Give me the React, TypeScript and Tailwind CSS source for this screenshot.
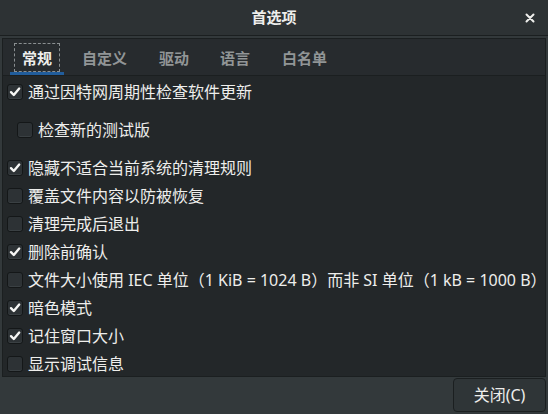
import React from "react";

const items: { label: string; checked: boolean; indent?: boolean }[] = [
  { label: "通过因特网周期性检查软件更新", checked: true },
  { label: "检查新的测试版", checked: false, indent: true },
  { label: "隐藏不适合当前系统的清理规则", checked: true },
  { label: "覆盖文件内容以防被恢复", checked: false },
  { label: "清理完成后退出", checked: false },
  { label: "删除前确认", checked: true },
  { label: "文件大小使用 IEC 单位（1 KiB = 1024 B）而非 SI 单位（1 kB = 1000 B）", checked: false },
  { label: "暗色模式", checked: true },
  { label: "记住窗口大小", checked: true },
  { label: "显示调试信息", checked: false },
];

function Box({ checked }: { checked: boolean }) {
  return (
    <div className="w-[16px] h-[16px] rounded-[3px] border border-[#141718] bg-[#2d3235] shadow-[inset_0_-1px_0_#3a4043] flex items-center justify-center shrink-0">
      {checked && (
        <svg width="12" height="12" viewBox="0 0 12 12">
          <path d="M2 6.2 L4.8 9 L10.2 2.6" stroke="#f6f6f4" strokeWidth="2.4" fill="none" strokeLinecap="round" strokeLinejoin="round" />
        </svg>
      )}
    </div>
  );
}

export default function App() {
  const font = { fontFamily: '"Noto Sans", "Noto Sans CJK SC", sans-serif' };
  return (
    <div className="w-[548px] h-[414px] bg-[#33393b] flex flex-col text-[#eeeeec] overflow-hidden" style={font}>
      <div className="h-[36px] bg-[#2d3234] border-b border-[#1b1f20] flex items-center justify-center relative shrink-0">
        <span className="text-[15px] font-bold text-[#eeeeec]">首选项</span>
        <svg className="absolute right-[13px] top-[13px]" width="10" height="10" viewBox="0 0 10 10">
          <path d="M1.5 1.5 L8.5 8.5 M8.5 1.5 L1.5 8.5" stroke="#eeeeec" strokeWidth="2" strokeLinecap="round" />
        </svg>
      </div>
      <div className="mx-[2px] mt-[2px] h-[339px] border border-[#1b1f20] bg-[#232729] flex flex-col shrink-0">
        <div className="h-[37px] flex items-end pl-[7px] border-b border-[#1b1f20] bg-[#272b2e] shrink-0">
          <div className="w-[54px] h-[37px] flex flex-col items-center">
            <div className="mt-[5px] px-[7px] h-[29px] border border-dashed border-[#8a8f91] flex items-center pt-[2px] text-[15px] font-bold text-[#eeeeec]">常规</div>
            <div className="mt-auto w-full h-[3px] bg-[#215d9c]" />
          </div>
          <div className="flex items-center h-[37px] pt-[3px] text-[15px] font-bold text-[#919596]">
            <span className="ml-[18px]">自定义</span>
            <span className="ml-[32px]">驱动</span>
            <span className="ml-[31px]">语言</span>
            <span className="ml-[32px]">白名单</span>
          </div>
        </div>
        <div className="flex flex-col pt-[2px]">
          {items.map((it, i) => (
            <div
              key={i}
              className={
                "flex items-center gap-[5px] text-[16px] whitespace-nowrap " +
                (it.indent ? "pl-[14px] h-[48px]" : "pl-[4px] h-[28px]")
              }
            >
              <Box checked={it.checked} />
              <span>{it.label}</span>
            </div>
          ))}
        </div>
      </div>
      <div className="flex-1 flex justify-end items-start pr-[2px] pt-[1px]">
        <div className="w-[93px] h-[34px] rounded-[4px] border border-[#1b1f20] bg-[#2f3537] flex items-center justify-center text-[16px]">
          关闭(C)
        </div>
      </div>
    </div>
  );
}
